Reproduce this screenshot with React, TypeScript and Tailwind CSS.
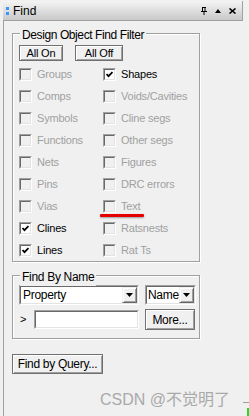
import React from 'react';

type Item = { label: string; checked?: boolean; disabled?: boolean };

const left: Item[] = [
  { label: 'Groups', disabled: true },
  { label: 'Comps', disabled: true },
  { label: 'Symbols', disabled: true },
  { label: 'Functions', disabled: true },
  { label: 'Nets', disabled: true },
  { label: 'Pins', disabled: true },
  { label: 'Vias', disabled: true },
  { label: 'Clines', checked: true },
  { label: 'Lines', checked: true },
];

const right: Item[] = [
  { label: 'Shapes', checked: true },
  { label: 'Voids/Cavities', disabled: true },
  { label: 'Cline segs', disabled: true },
  { label: 'Other segs', disabled: true },
  { label: 'Figures', disabled: true },
  { label: 'DRC errors', disabled: true },
  { label: 'Text', disabled: true },
  { label: 'Ratsnests', disabled: true },
  { label: 'Rat Ts', disabled: true },
];

const CheckRow = ({ item }: { item: Item }) => (
  <div className="flex items-center h-[22px] gap-[5px]">
    <span className="w-[13px] h-[13px] shrink-0 border border-t-[#a0a0a0] border-l-[#a0a0a0] border-r-white border-b-white">
      <span
        className={`flex items-center justify-center w-full h-full border border-t-[#696969] border-l-[#696969] border-r-[#e3e3e3] border-b-[#e3e3e3] ${
          item.disabled ? 'bg-[#f0f0f0]' : 'bg-white'
        }`}
      >
        {item.checked && (
          <svg width="7" height="7" viewBox="0 0 7 7">
            <path d="M0.5 3 L2.5 5.2 L6.5 1" fill="none" stroke="#000" strokeWidth="1.8" />
          </svg>
        )}
      </span>
    </span>
    <span className={item.disabled ? 'text-[#a0a0a0]' : 'text-black'}>{item.label}</span>
  </div>
);

const Button = ({ children, className }: { children: React.ReactNode; className: string }) => (
  <div
    className={`flex items-center justify-center border border-[#707070] bg-[#f0f0f0] shadow-[inset_1px_1px_0_#fff,inset_-1px_-1px_0_#a0a0a0] text-black ${className}`}
  >
    {children}
  </div>
);

const Arrow = () => (
  <span className="flex items-center justify-center w-[15px] h-full bg-[#f0f0f0] border border-t-[#f0f0f0] border-l-[#f0f0f0] border-r-[#696969] border-b-[#696969] shadow-[inset_1px_1px_0_#fff,inset_-1px_-1px_0_#a0a0a0]">
    <svg width="7" height="4" viewBox="0 0 7 4">
      <path d="M0 0 H7 L3.5 4 Z" fill="#000" />
    </svg>
  </span>
);

const Sunken = ({ children, className }: { children: React.ReactNode; className: string }) => (
  <div className={`border border-t-[#a0a0a0] border-l-[#a0a0a0] border-r-white border-b-white ${className}`}>
    <div className="flex items-center h-full border border-t-[#696969] border-l-[#696969] border-r-[#e3e3e3] border-b-[#e3e3e3] bg-white">
      {children}
    </div>
  </div>
);

export default function App() {
  return (
    <div className="relative w-[249px] h-[416px] overflow-hidden bg-[#f0f0f0] text-[11px] tracking-[-0.2px] text-black font-['Liberation_Sans',Arial,sans-serif]">
      {/* Title bar */}
      <div className="flex items-center ml-[3px] mt-[1px] w-[240px] h-[20px] border-r border-b border-[#a0a0a0] bg-gradient-to-b from-[#f4f4f4] to-[#c9c9c9]">
        <div className="flex flex-col gap-[2px] ml-[3px] mr-[4px]">
          <span className="w-[3px] h-[3px] bg-[#3399ff]" />
          <span className="w-[3px] h-[3px] bg-[#3399ff]" />
        </div>
        <span className="text-[12px] tracking-normal">Find</span>
        <div className="flex items-center ml-auto mr-[6px] gap-[8px]">
          <svg width="6" height="8" viewBox="0 0 6 8">
            <path d="M1 0.5 H5 M1.5 0.5 V4.5 M4 0.5 V4.5 M0 4.5 H6 M3 4.5 V8" fill="none" stroke="#000" strokeWidth="1" />
          </svg>
          <svg width="6" height="4" viewBox="0 0 6 4">
            <path d="M0 4 H6 L3 0 Z" fill="#000" />
          </svg>
          <svg width="7" height="6" viewBox="0 0 7 6">
            <path d="M0.5 0.5 L6.5 5.5 M6.5 0.5 L0.5 5.5" fill="none" stroke="#000" strokeWidth="1.6" />
          </svg>
        </div>
      </div>

      {/* Panel body */}
      <div className="ml-[3px] h-[395px] border-l border-[#a0a0a0] pt-[12px]">
        {/* Design Object Find Filter */}
        <div className="relative ml-[8px] w-[188px] h-[229px] border border-[#a0a0a0] shadow-[inset_1px_1px_0_#fff,1px_1px_0_#fff] pt-[11px] pl-[6px]">
          <span className="absolute -top-[8px] left-[7px] px-[2px] bg-[#f0f0f0] text-[12px] tracking-[-0.4px]">
            Design Object Find Filter
          </span>
          <div className="flex gap-[12px]">
            <Button className="w-[44px] h-[16px]">All On</Button>
            <Button className="w-[48px] h-[16px]">All Off</Button>
          </div>
          <div className="flex mt-[2px]">
            <div className="flex flex-col w-[84px]">
              {left.map((it) => (
                <CheckRow key={it.label} item={it} />
              ))}
            </div>
            <div className="flex flex-col">
              {right.map((it) => (
                <CheckRow key={it.label} item={it} />
              ))}
            </div>
          </div>
        </div>

        {/* Find By Name */}
        <div className="relative ml-[8px] mt-[13px] w-[188px] h-[64px] border border-[#a0a0a0] shadow-[inset_1px_1px_0_#fff,1px_1px_0_#fff] pt-[9px] pl-[6px]">
          <span className="absolute -top-[8px] left-[7px] px-[2px] bg-[#f0f0f0] text-[12px] tracking-[-0.3px]">
            Find By Name
          </span>
          <div className="flex gap-[6px]">
            <Sunken className="w-[120px] h-[20px]">
              <span className="flex-1 pl-[2px] text-[12px] tracking-[-0.3px]">Property</span>
              <Arrow />
            </Sunken>
            <Sunken className="w-[51px] h-[20px]">
              <span className="flex-1 pl-[1px] text-[12px] tracking-[-0.3px]">Name</span>
              <Arrow />
            </Sunken>
          </div>
          <div className="flex items-center mt-[4px]">
            <span className="w-[15px] pl-[1px] text-[11px]">&gt;</span>
            <Sunken className="w-[105px] h-[19px]">
              <span />
            </Sunken>
            <Button className="ml-[6px] w-[50px] h-[21px] text-[12px] tracking-[-0.3px]">More...</Button>
          </div>
        </div>

        {/* Find by Query */}
        <Button className="ml-[8px] mt-[15px] w-[91px] h-[20px] text-[12px] tracking-[-0.3px]">Find by Query...</Button>

        {/* Watermark */}
        <div className="ml-[96px] mt-[14px] text-[16px] tracking-normal text-[#a9a9a9] font-['Liberation_Sans','Noto_Sans_CJK_SC',sans-serif]">
          CSDN @不觉明了
        </div>
      </div>

      {/* annotation underline */}
      <span className="absolute left-[100px] top-[214px] w-[44px] h-[3px] rounded-[1px] bg-[#e40000] shadow-[0_1px_2px_rgba(0,0,0,0.35)]" />
      <span className="absolute left-[243px] top-[402px] w-[6px] h-px bg-[#a0a0a0]" />
      <span className="absolute left-[247px] top-[408px] w-[2px] h-[8px] bg-[#22dd22]" />
    </div>
  );
}
